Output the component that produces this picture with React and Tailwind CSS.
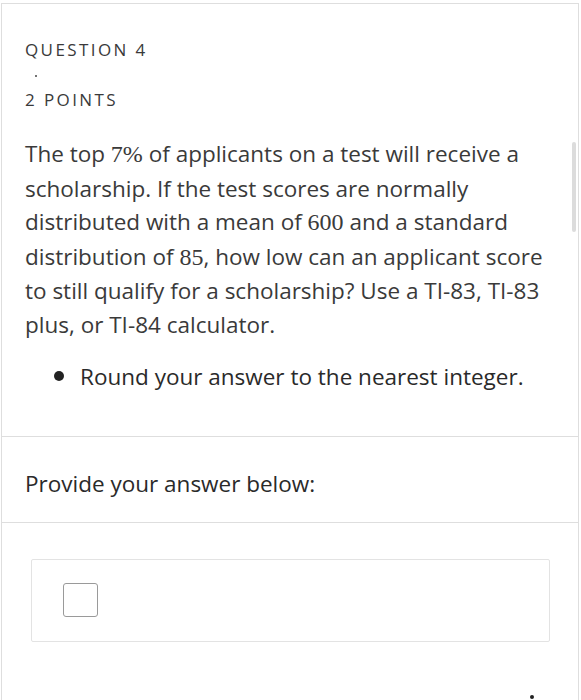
const serif = { fontFamily: '"Liberation Serif", "Times New Roman", "DejaVu Serif", serif' };

export default function App() {
  return (
    <div className="w-[581px] h-[700px] bg-white overflow-hidden relative font-['Open_Sans','Noto_Sans',sans-serif]">
      <div className="ml-[1px] mt-[3px] w-[578px] h-[720px] border border-[#dedede] bg-white text-[#333]">
        <div className="px-[23px] pt-[34px]">
          <div className="text-[17px] tracking-[2.4px] text-[#3a3a3a] leading-[24px]">QUESTION 4</div>
          <div className="h-[2px] w-[2px] bg-[#444] rounded-full ml-[10px] mt-[13px]"></div>
          <div className="text-[17px] tracking-[2.4px] text-[#3a3a3a] leading-[24px] mt-[11px]">2 POINTS</div>
        </div>
        <div className="px-[23px] pt-[25px] pr-[20px]">
          <p className="text-[22.5px] leading-[33.6px] text-[#3a3a3a]">
            The top <span className="text-[24px]" style={serif}>7%</span> of applicants on a test will receive a scholarship. If the test scores are normally
            distributed with a mean of <span className="text-[24px]" style={serif}>600</span> and a standard distribution of <span className="text-[24px]" style={serif}>85</span>, how low can an applicant
            score to still qualify for a scholarship? Use a TI-83, TI-83 plus, or TI-84 calculator.
          </p>
          <ul className="mt-[18px] ml-[29px] pb-[43px]">
            <li className="flex items-center text-[22.5px] leading-[33.6px] text-[#2a2a2a]">
              <span className="w-[10px] h-[10px] rounded-full bg-[#222] mr-[16px] shrink-0"></span>
              Round your answer to the nearest integer.
            </li>
          </ul>
        </div>
        <div className="border-t border-[#dedede] px-[23px] pt-[30px] pb-[21px]">
          <div className="text-[22.5px] leading-[33.6px] text-[#2a2a2a]">Provide your answer below:</div>
        </div>
        <div className="border-t border-[#dedede] pt-[36px] pl-[29px]">
          <div className="w-[519px] h-[83px] border border-[#e3e3e3] rounded-[2px] flex items-center pl-[31px]">
            <div className="w-[35px] h-[34px] border border-[#9a9a9a] rounded-[3px]"></div>
          </div>
        </div>
      </div>
      <div className="absolute left-[572px] top-[142px] w-[4px] h-[90px] rounded-full bg-[#dcdcdc]"></div>
      <div className="absolute left-[530px] top-[695px] w-[4px] h-[4px] rounded-full bg-[#222]"></div>
    </div>
  );
}
